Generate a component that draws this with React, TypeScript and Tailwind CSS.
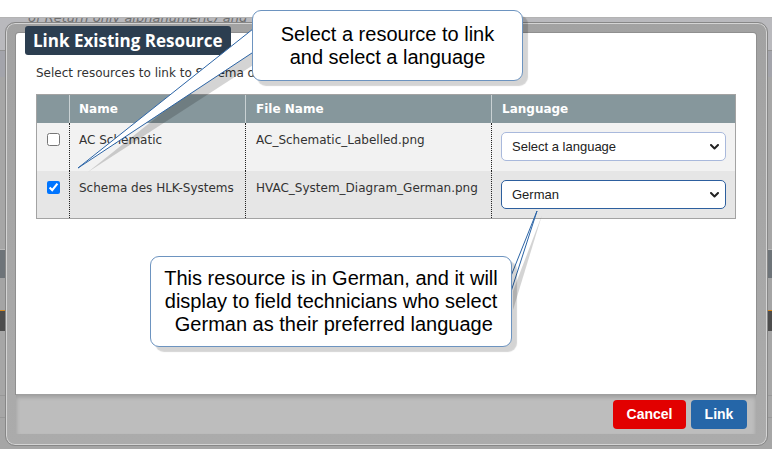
import React from "react";

const dv = { fontFamily: '"DejaVu Sans", Verdana, sans-serif' };
const ar = { fontFamily: '"Liberation Sans", Arial, sans-serif' };

function Chevron() {
  return (
    <svg width="9" height="6" viewBox="0 0 9 6" className="pointer-events-none absolute right-[7px] top-1/2 -translate-y-1/2">
      <path d="M1 1 L4.5 4.5 L8 1" fill="none" stroke="#222" strokeWidth="2" strokeLinecap="round" strokeLinejoin="round" />
    </svg>
  );
}

function LangSelect({ value, focused }: { value: string; focused?: boolean }) {
  return (
    <div className="relative h-[29px] w-full">
      <select
        defaultValue={value}
        className={
          "h-full w-full appearance-none rounded-[5px] bg-white pl-[10px] text-[13px] text-[#222] outline-none " +
          (focused ? "border-[1.5px] border-[#2d5f9e]" : "border border-[#a9b9dc]")
        }
        style={ar}
      >
        <option>Select a language</option>
        <option>German</option>
        <option>English</option>
      </select>
      <Chevron />
    </div>
  );
}

export default function App() {
  const rows = [
    { name: "AC Schematic", file: "AC_Schematic_Labelled.png", lang: "Select a language", checked: false, bg: "bg-[#f2f2f2]", h: "h-[48px]" },
    { name: "Schema des HLK-Systems", file: "HVAC_System_Diagram_German.png", lang: "German", checked: true, bg: "bg-[#e6e6e6]", h: "h-[47px]" },
  ];
  return (
    <div className="relative h-[449px] w-[772px] overflow-hidden bg-white">
      {/* background page (dimmed) */}
      <div className="h-[17px] bg-white" />
      <div className="flex h-[432px] flex-col border-t border-[#b3b3b3] bg-[#a6a6a6]">
        <div className="h-[32px] overflow-hidden bg-[#b9b9bd] pl-[28px]">
          <div className="-mt-[7px] text-[13px] italic leading-[14px] text-[#6e6e6e]" style={dv}>
            of Return only alphanumeric) and
          </div>
        </div>
        <div className="h-px bg-[#929292]" />
        <div className="h-[26px] bg-[#a3a4ab]" />
        <div className="h-[172px] bg-[#a6a6a6]" />
        <div className="h-[29px] border-t border-[#b9b9b9] bg-[#6e7479]" />
        <div className="h-[32px] bg-[#a4a4a4]" />
        <div className="h-px bg-[#d58a22]" />
        <div className="h-[20px] bg-[#4d4d4d]" />
        <div className="h-[65px] border-b border-[#989898] bg-[#a6a6a6]" />
        <div className="h-[22px] border-b border-[#989898] bg-[#a6a6a6]" />
        <div className="flex-1 bg-[#a6a6a6]" />
      </div>

      {/* modal */}
      <div className="absolute left-[5px] top-[22px] flex h-[424px] w-[763px] flex-col rounded-[10px] border border-[#878787] bg-gradient-to-b from-[#a2a2a2] to-[#ababab] pb-[11px] pl-[10px] pr-[11px] pt-[10px] shadow-[inset_0_0_0_1px_#d4d4d4]">
        <div className="flex h-[361px] flex-col rounded-t-[3px] bg-white pl-[20px] shadow-[0_0_0_1px_#8f8f8f]">
          <div className="mt-[33px] text-[12px] leading-[14px] text-[#333]" style={dv}>
            Select resources to link to Schema des HLK-Systems
          </div>
          <div className="mt-[14px] w-[700px] border border-[#a3a3a3]" style={dv}>
            <div className="grid h-[28px] grid-cols-[33px_176px_246px_243px] bg-[#86979c] text-[12px] font-bold text-white">
              <div className="border-r border-[#c9d1d3]" />
              <div className="flex items-center border-r border-[#c9d1d3] pl-[9px]">Name</div>
              <div className="flex items-center border-r border-[#c9d1d3] pl-[10px]">File Name</div>
              <div className="flex items-center pl-[10px]">Language</div>
            </div>
            {rows.map((r) => (
              <div key={r.name} className={"grid grid-cols-[33px_176px_246px_243px] text-[12px] leading-[14px] text-[#333] " + r.bg + " " + r.h}>
                <div className="flex justify-center border-r border-dotted border-[#222] pt-[10px]">
                  <input type="checkbox" defaultChecked={r.checked} className="m-0 h-[13px] w-[13px]" />
                </div>
                <div className="border-r border-dotted border-[#222] pl-[9px] pt-[10px]">{r.name}</div>
                <div className="border-r border-dotted border-[#222] pl-[10px] pt-[10px]">{r.file}</div>
                <div className="pl-[9px] pr-[9px] pt-[9px]">
                  <LangSelect value={r.lang} focused={r.checked} />
                </div>
              </div>
            ))}
          </div>
        </div>
        <div className="flex h-[40px] items-center justify-end gap-[5px] bg-[#bdbdbd] pr-[9px] shadow-[inset_0_3px_4px_rgba(0,0,0,0.18)]">
          <button className="h-[29px] w-[73px] rounded-[4px] bg-[#e20000] text-[14px] font-bold text-white" style={ar}>
            Cancel
          </button>
          <button className="h-[29px] w-[56px] rounded-[4px] bg-[#2566a8] text-[14px] font-bold text-white" style={ar}>
            Link
          </button>
        </div>
        <div
          className="absolute left-[19px] top-[3px] flex h-[29px] w-[206px] items-center rounded-[3px] bg-[#2c3e50] pl-[8px] text-[17px] font-bold text-white"
          style={{ fontFamily: '"Open Sans", sans-serif' }}
        >
          Link Existing Resource
        </div>
      </div>

      {/* callout tails */}
      <svg className="pointer-events-none absolute left-0 top-0" width="772" height="449">
        <polygon points="88,172 264,32 264,58" fill="rgba(0,0,0,0.17)" />
        <polygon points="78,168 258,25 258,49" fill="white" stroke="#2b64a6" strokeWidth="1" />
        <polygon points="542,215 513,291 513,310" fill="rgba(0,0,0,0.17)" />
        <polygon points="537,211 507,286 507,304" fill="white" stroke="#2b64a6" strokeWidth="1" />
      </svg>

      {/* callout 1 */}
      <div
        className="absolute left-[252px] top-[10px] flex h-[71px] w-[271px] flex-col items-center justify-center rounded-[9px] border-[1.5px] border-[#6d94c0] bg-white text-[20px] leading-[23px] text-black shadow-[5px_5px_1px_rgba(0,0,0,0.17)]"
        style={ar}
      >
        <div>Select a resource to link</div>
        <div>and select a language</div>
      </div>

      {/* callout 2 */}
      <div
        className="absolute left-[150px] top-[256px] flex h-[91px] w-[362px] flex-col items-center justify-center rounded-[9px] border-[1.5px] border-[#6d94c0] bg-white text-[20px] leading-[23px] text-black shadow-[5px_5px_1px_rgba(0,0,0,0.17)]"
        style={ar}
      >
        <div>This resource is in German, and it will</div>
        <div>display to field technicians who select</div>
        <div>&nbsp;German as their preferred language</div>
      </div>
    </div>
  );
}
